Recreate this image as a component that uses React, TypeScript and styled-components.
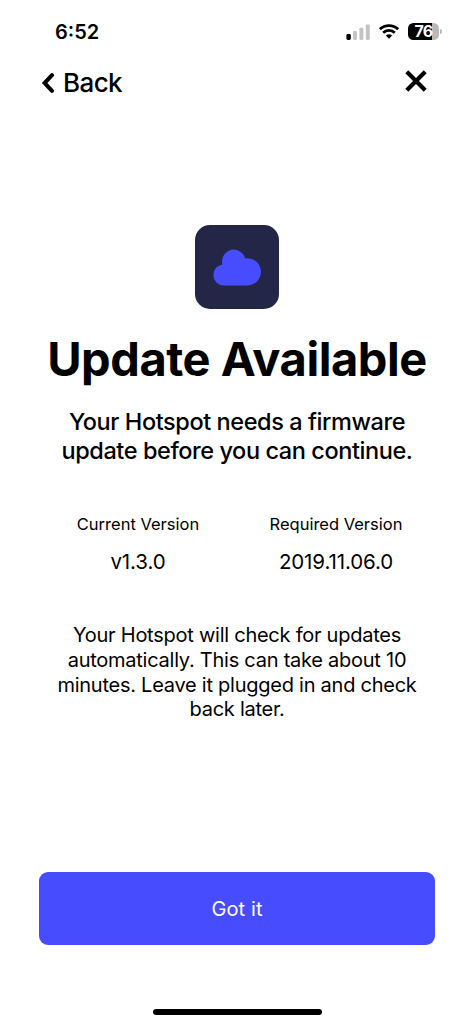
import React from 'react';
import styled, { createGlobalStyle } from 'styled-components';

const GlobalStyle = createGlobalStyle`
  * {
    box-sizing: border-box;
  }

  body {
    margin: 0;
    background: #ffffff;
    color: #000000;
    font-family: Inter, "Liberation Sans", sans-serif;
  }

  h1, h2, p {
    margin: 0;
  }
`;

const Screen = styled.div`
  display: flex;
  flex-direction: column;
  width: 474px;
  height: 1025px;
  padding: 0 39px;
  overflow: hidden;
`;

const StatusBar = styled.div`
  display: flex;
  align-items: center;
  justify-content: space-between;
  height: 24px;
  margin-top: 20px;
  padding-left: 16px;
  margin-right: -7px;
`;

const Time = styled.span`
  font-size: 20px;
  font-weight: 600;
  line-height: 24px;
`;

const StatusIcons = styled.div`
  display: flex;
  align-items: center;
  margin-top: -1px;
`;

const SignalSvg = styled.svg`
  margin-right: 9px;
`;

const WifiSvg = styled.svg`
  margin-right: 9px;
`;

const Battery = styled.div`
  display: flex;
  align-items: center;
  justify-content: center;
  width: 31px;
  height: 17px;
  border-radius: 5.5px;
  background: linear-gradient(to right, #000000 76%, #b9b9b9 76%);
  color: #ffffff;
  font-size: 16px;
  font-weight: 700;
  line-height: 17px;
  letter-spacing: -0.6px;
`;

const BatteryTip = styled.div`
  width: 2px;
  height: 5px;
  margin-left: 1px;
  border-radius: 0 2px 2px 0;
  background: #b9b9b9;
`;

const NavBar = styled.div`
  display: flex;
  align-items: center;
  justify-content: space-between;
  height: 32px;
  margin-top: 23px;
`;

const NavButton = styled.button`
  display: flex;
  align-items: center;
  padding: 0;
  border: none;
  background: none;
  color: #000000;
  font-family: inherit;
  font-size: 26px;
  font-weight: 500;
  line-height: 32px;
  letter-spacing: -0.6px;
`;

const BackSvg = styled.svg`
  margin: 0 8px 0 2px;
`;

const CloseSvg = styled.svg`
  margin: -4px 8px 0 0;
`;

const Content = styled.main`
  display: flex;
  flex: 1;
  flex-direction: column;
  align-items: center;
  padding-top: 126px;
  text-align: center;
  white-space: nowrap;
`;

const IconTile = styled.div`
  display: flex;
  align-items: center;
  justify-content: center;
  width: 84px;
  height: 84px;
  border-radius: 15px;
  background: #242648;
`;

const Title = styled.h1`
  margin-top: 22px;
  font-size: 47px;
  font-weight: 700;
  line-height: 56px;
  letter-spacing: -0.45px;
`;

const SubTitle = styled.h2`
  margin-top: 21px;
  font-size: 23.5px;
  font-weight: 500;
  line-height: 28.5px;
  letter-spacing: -0.42px;
`;

const Versions = styled.div`
  display: grid;
  grid-template-columns: 1fr 1fr;
  align-self: stretch;
  margin-top: 49px;
`;

const Version = styled.div`
  display: flex;
  flex-direction: column;
  gap: 16px;
`;

const VersionLabel = styled.span`
  font-size: 16.5px;
  line-height: 20px;
`;

const VersionValue = styled.span`
  font-size: 20.5px;
  line-height: 24px;
  letter-spacing: -0.1px;
`;

const Description = styled.p`
  margin-top: 49px;
  font-size: 20px;
  line-height: 24.8px;
  letter-spacing: -0.25px;
`;

const Button = styled.button`
  height: 73px;
  border: none;
  border-radius: 9px;
  background: #474dff;
  color: #ffffff;
  font-family: inherit;
  font-size: 20px;
  line-height: 24px;
  letter-spacing: 0.1px;
`;

const HomeIndicator = styled.div`
  align-self: center;
  width: 169px;
  height: 6px;
  margin: 64px 0 10px;
  border-radius: 3px;
  background: #000000;
`;

const versions = [
  { label: 'Current Version', value: 'v1.3.0' },
  { label: 'Required Version', value: '2019.11.06.0' },
];

function Signal() {
  return (
    <SignalSvg width="24" height="16" viewBox="0 0 24 16">
      <rect x="0.4" y="10" width="4.4" height="6" rx="1.4" fill="#000000" />
      <rect x="7" y="7" width="4" height="9" rx="1.4" fill="#c4c4c4" />
      <rect x="13.4" y="3.8" width="4" height="12.2" rx="1.4" fill="#c4c4c4" />
      <rect x="19.8" y="0.6" width="4" height="15.4" rx="1.4" fill="#c4c4c4" />
    </SignalSvg>
  );
}

function Wifi() {
  return (
    <WifiSvg width="20" height="15" viewBox="0 0 20 15" fill="none" stroke="#000000" strokeWidth="2.8">
      <path d="M0.9 5.2a13.2 13.2 0 0 1 18.2 0" />
      <path d="M4.2 8.7a8.4 8.4 0 0 1 11.6 0" />
      <path d="M6.9 11.6a4.5 4.5 0 0 1 6.2 0L10 14.7z" fill="#000000" stroke="none" />
    </WifiSvg>
  );
}

export default function App() {
  return (
    <>
      <GlobalStyle />
      <Screen>
        <StatusBar>
          <Time>6:52</Time>
          <StatusIcons>
            <Signal />
            <Wifi />
            <Battery>76</Battery>
            <BatteryTip />
          </StatusIcons>
        </StatusBar>
        <NavBar>
          <NavButton>
            <BackSvg width="14" height="20" viewBox="0 0 14 20" fill="none" stroke="#000000" strokeWidth="4">
              <path d="M11 2.2 3.6 10l7.4 7.8" strokeLinecap="round" />
            </BackSvg>
            Back
          </NavButton>
          <NavButton aria-label="Close">
            <CloseSvg width="22" height="22" viewBox="0 0 22 22" fill="none" stroke="#000000" strokeWidth="4.2">
              <path d="M1.8 1.8 20.2 20.2M20.2 1.8 1.8 20.2" />
            </CloseSvg>
          </NavButton>
        </NavBar>
        <Content>
          <IconTile>
            <svg width="48" height="37" viewBox="0 0 48 37" fill="#474dff">
              <path d="M10.8 36.5A10.5 10.5 0 0 1 0.3 26A10.5 10.5 0 0 1 9.4 15.6A12 12 0 0 1 21 0.6A12 12 0 0 1 32.2 9.4A13.6 13.6 0 0 1 47.9 23A13.6 13.6 0 0 1 34.3 36.5z" />
            </svg>
          </IconTile>
          <Title>Update Available</Title>
          <SubTitle>
            Your Hotspot needs a firmware
            <br />
            update before you can continue.
          </SubTitle>
          <Versions>
            {versions.map(({ label, value }) => (
              <Version key={label}>
                <VersionLabel>{label}</VersionLabel>
                <VersionValue>{value}</VersionValue>
              </Version>
            ))}
          </Versions>
          <Description>
            Your Hotspot will check for updates
            <br />
            automatically. This can take about 10
            <br />
            minutes. Leave it plugged in and check
            <br />
            back later.
          </Description>
        </Content>
        <Button>Got it</Button>
        <HomeIndicator />
      </Screen>
    </>
  );
}
